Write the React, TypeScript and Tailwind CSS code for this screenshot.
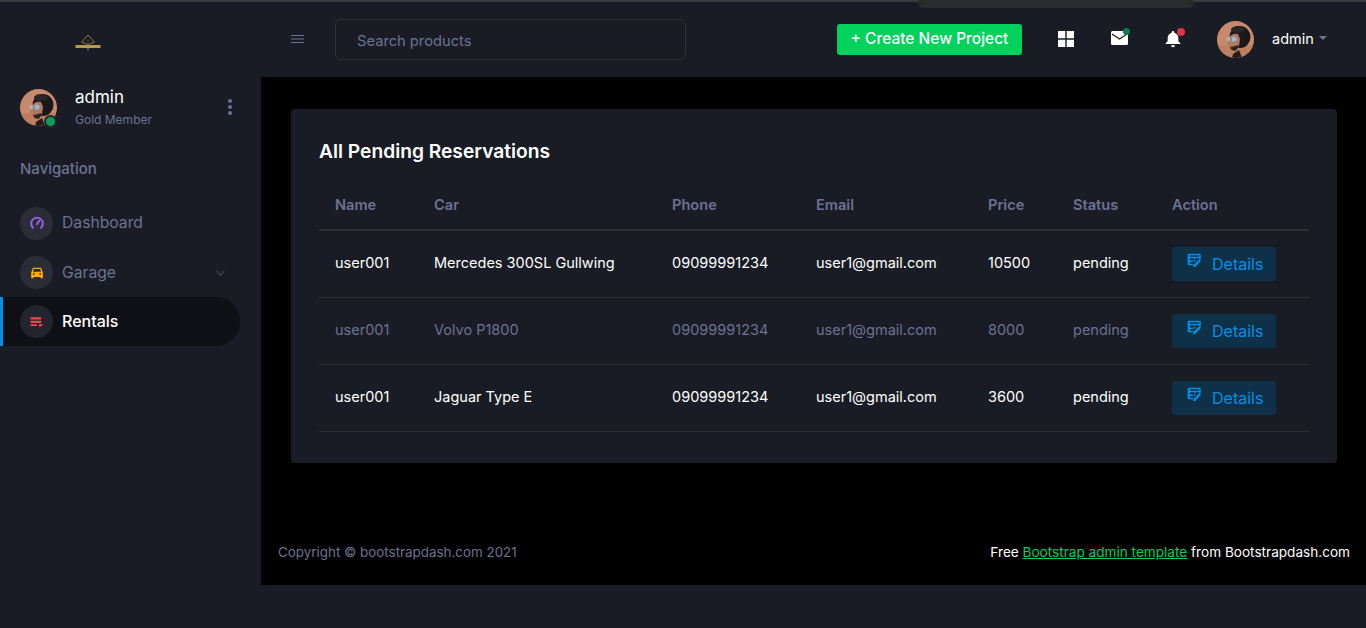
import { useId } from "react";

const font = "font-['Inter','Roboto',sans-serif]";

const rows = [
  { name: "user001", car: "Mercedes 300SL Gullwing", phone: "09099991234", email: "user1@gmail.com", price: "10500", muted: false },
  { name: "user001", car: "Volvo P1800", phone: "09099991234", email: "user1@gmail.com", price: "8000", muted: true },
  { name: "user001", car: "Jaguar Type E", phone: "09099991234", email: "user1@gmail.com", price: "3600", muted: false },
];

function Avatar({ size }: { size: number }) {
  const id = useId();
  return (
    <svg width={size} height={size} viewBox="0 0 37 37" className="block shrink-0">
      <defs>
        <clipPath id={id}>
          <circle cx="18.5" cy="18.5" r="18.5" />
        </clipPath>
      </defs>
      <g clipPath={`url(#${id})`}>
        <rect width="37" height="37" fill="#c88a6c" />
        <rect x="0" y="24" width="37" height="13" fill="#bd7f60" />
        {/* hat */}
        <ellipse cx="23" cy="16" rx="10.500" ry="11" fill="#1b1819" />
        <ellipse cx="21" cy="8.500" rx="7" ry="3.500" fill="#2a2626" />
        {/* face */}
        <path d="M12 17c1-3 5-5 9-4l2 5-1 7-5 5c-3 0-5-2-5-5l-2-2z" fill="#b07a60" />
        {/* glasses */}
        <circle cx="17" cy="18" r="2.600" fill="#9db6d2" />
        <circle cx="11.500" cy="18" r="2" fill="#9db6d2" />
        <path d="M13 18h2" stroke="#5d6a7d" strokeWidth="0.800" />
        {/* beard and shirt */}
        <path d="M13 25.500c2 .5 4.500 .2 7.500-1.500l1.500 1.500-3.500 4.500-4-1z" fill="#2c2220" />
        <path d="M16 33l6-4 3 8H15z" fill="#231c1c" />
      </g>
    </svg>
  );
}

function DetailsButton() {
  return (
    <button className="flex h-[34px] w-[104px] items-center rounded-[3px] bg-[#0e3148] pl-[15px] text-base text-[#0090e7]">
      <svg width="15" height="15" viewBox="0 0 24 24" fill="currentColor" className="mb-[6px] mr-[10px] shrink-0">
        <path d="M3 1h17a2 2 0 0 1 2 2v7h-2.500V8.500H12.500V12h2.500l-2.500 2.500h-1V8.500h-7V12h5v2.500h-5V17h5v2.500H3a2 2 0 0 1-2-2V3a2 2 0 0 1 2-2zm1.500 2.500V6h15V3.500zM22.500 12.500L13 22.500H10v-3l9.500-9.500z" />
      </svg>
      Details
    </button>
  );
}

function NavIcon({ children, active }: { children: React.ReactNode; active?: boolean }) {
  return (
    <span className={`flex h-[33px] w-[33px] shrink-0 items-center justify-center rounded-full ${active ? "bg-[#22252d]" : "bg-[#2a2d37]"}`}>
      {children}
    </span>
  );
}

export default function App() {
  return (
    <div className={`relative h-[628px] w-[1366px] overflow-hidden bg-[#191c24] ${font} text-sm text-white`}>
      <div className="h-[2px] bg-[#3a3b3f]" />
      {/* dropdown peeking out of the top */}
      <div className="absolute left-[918px] top-0 h-[8px] w-[276px] rounded-b-[6px] bg-[#2a2b2f]" />

      <div className="flex h-[626px]">
        <aside className="w-[261px] shrink-0">
          <div className="flex h-[72px] justify-center pt-[32px]">
            <svg width="26" height="18" viewBox="0 0 26 18" className="mr-[86px]">
              <path d="M13 1l6.500 7L13 10.500 6.500 8z" fill="none" stroke="#8d7a45" strokeWidth="1" />
              <circle cx="13" cy="6.500" r="1" fill="#5a4e2e" />
              <rect x="0.500" y="11" width="25" height="3" fill="#b99c52" />
              <path d="M11.500 14.500h3L13 16.500z" fill="#8d7a45" />
            </svg>
          </div>

          <div className="flex h-[66px] items-center pl-5 pr-[29px]">
            <div className="relative">
              <Avatar size={37} />
              <span className="absolute bottom-[-2px] right-0 h-[13px] w-[13px] rounded-full border-2 border-[#22252b] bg-[#0f9d58]" />
            </div>
            <div className="ml-[18px] flex-1">
              <div className="mt-[-1px] text-[17px] leading-[20px]">admin</div>
              <div className="mt-[5px] text-xs leading-[15px] text-[#6c7293]">Gold Member</div>
            </div>
            <div className="flex flex-col gap-[2px]">
              <span className="h-[4px] w-[4px] rounded-full bg-[#6c7293]" />
              <span className="h-[4px] w-[4px] rounded-full bg-[#6c7293]" />
              <span className="h-[4px] w-[4px] rounded-full bg-[#6c7293]" />
            </div>
          </div>

          <div className="mt-[19px] pl-5 text-[15px] font-medium leading-[20px] text-[#6c7293]">Navigation</div>

          <nav className="mt-[19px]">
            <div className="flex h-[50px] items-center pl-5 text-[15.700px] text-[#6c7293]">
              <NavIcon>
                <svg width="14" height="14" viewBox="0 0 24 24" fill="none" stroke="#8f5fe8" strokeWidth="3.500" strokeLinecap="round">
                  <path d="M5 20a10 10 0 1 1 14 0" />
                  <path d="M12 14l4-6" />
                </svg>
              </NavIcon>
              <span className="ml-[9px]">Dashboard</span>
            </div>
            <div className="flex h-[49px] items-center pl-5 pr-[36px] text-[15.700px] text-[#6c7293]">
              <NavIcon>
                <svg width="14" height="14" viewBox="0 0 24 24" fill="#ffab00">
                  <path d="M5 3h14l3 8v10h-4v-2H6v2H2V11zm1.500 2L5 10h14l-1.500-5zM6.500 12a1.500 1.500 0 1 0 0 3 1.500 1.500 0 0 0 0-3zm11 0a1.500 1.500 0 1 0 0 3 1.500 1.500 0 0 0 0-3z" />
                </svg>
              </NavIcon>
              <span className="ml-[9px] mt-[2px] flex-1">Garage</span>
              <svg width="9" height="6" viewBox="0 0 9 6" fill="none" stroke="#3d404c" strokeWidth="1.300">
                <path d="M0.500 1l4 4 4-4" />
              </svg>
            </div>
            <div className="flex h-[49px] w-[240px] items-center rounded-r-full border-l-[3px] border-[#0090e7] bg-[#0f1015] pl-[17px] text-base text-white">
              <NavIcon active>
                <svg width="14" height="14" viewBox="0 0 24 24" fill="#fc424a">
                  <path d="M1 4h18v3.500H1zM1 10h18v3.500H1zM1 16h11v3H1zM15 16h8l-4 3.500h-4z" />
                </svg>
              </NavIcon>
              <span className="ml-[9px] mt-[-2px] font-medium">Rentals</span>
            </div>
          </nav>
        </aside>

        <div className="flex min-w-0 flex-1 flex-col">
          <header className="flex h-[75px] shrink-0 items-center">
            <svg width="13" height="10" viewBox="0 0 13 10" stroke="#6c7293" strokeWidth="1" className="ml-[30px] mt-[-2px]">
              <path d="M0 1.500h13M0 5h13M0 8.500h13" />
            </svg>
            <div className="ml-[31px] flex h-[41px] w-[351px] items-center rounded-[6px] border border-[#2c2e33] pl-[21px] pt-[3px] text-[14.700px] text-[#6c7293]">
              Search products
            </div>
            <button className="ml-[151px] mt-[-1px] h-[31px] w-[185px] rounded-[3px] bg-[#00d25b] text-[15.500px] font-medium">+ Create New Project</button>
            <svg width="16" height="16" viewBox="0 0 16 16" fill="#fff" className="ml-[36px] mt-[-1px]">
              <path d="M0 0h7.300v7.300H0zM8.700 0H16v7.300H8.700zM0 8.700h7.300V16H0zM8.700 8.700H16V16H8.700z" />
            </svg>
            <span className="relative ml-[37px] mt-[-3px]">
              <svg width="17" height="14" viewBox="0 0 17 14" className="block">
                <rect width="17" height="14" rx="1.500" fill="#fff" />
                <path d="M1 3l7.500 5L16 3" fill="none" stroke="#191c24" strokeWidth="1.200" />
              </svg>
              <span className="absolute right-[-2px] top-[-3px] h-[7px] w-[7px] rounded-full bg-[#0f7a4d]" />
            </span>
            <span className="relative ml-[37px] mt-[-2px]">
              <svg width="16" height="18" viewBox="0 0 24 26" fill="#fff" className="block">
                <path d="M12 1a2 2 0 0 1 2 2v.500c3.500 1 6 4 6 8v5l3 3v1H1v-1l3-3v-5c0-4 2.500-7 6-8V3a2 2 0 0 1 2-2zM9 22.500h6a3 3 0 0 1-6 0z" />
              </svg>
              <span className="absolute right-[-4px] top-[-2px] h-[8px] w-[8px] rounded-full bg-[#dc3545]" />
            </span>
            <span className="ml-[36px] mt-[-1px]">
              <Avatar size={37} />
            </span>
            <span className="ml-[18px] mt-[-1px] text-[14.500px] font-normal">admin</span>
            <span className="ml-[5px] mt-[-3px] h-0 w-0 border-x-[4px] border-t-[4px] border-x-transparent border-t-[#6c7293]" />
          </header>

          <main className="flex h-[508px] flex-col bg-black">
            <section className="ml-[30px] mr-[29px] mt-[32px] h-[354px] rounded-[4px] bg-[#191c24] px-[28px] pt-[31px]">
              <h2 className="text-[19.200px] font-semibold leading-[22px]">All Pending Reservations</h2>
              <table className="mt-[22px] w-full table-fixed border-collapse">
                <colgroup>
                  <col className="w-[99px]" />
                  <col className="w-[238px]" />
                  <col className="w-[144px]" />
                  <col className="w-[172px]" />
                  <col className="w-[85px]" />
                  <col className="w-[99px]" />
                  <col />
                </colgroup>
                <thead>
                  <tr className="h-[46px] border-b-2 border-[#2c2e33] text-left text-[14.600px] font-medium text-[#6c7293]">
                    {["Name", "Car", "Phone", "Email", "Price", "Status", "Action"].map((h) => (
                      <th key={h} className="pb-[2px] pl-4 font-semibold">{h}</th>
                    ))}
                  </tr>
                </thead>
                <tbody>
                  {rows.map((r) => (
                    <tr key={r.car} className={`h-[67px] border-b border-[#2c2e33] text-[14.500px] ${r.muted ? "text-[#6c7293]" : "text-white"}`}>
                      <td className="pl-4">{r.name}</td>
                      <td className="pl-4">{r.car}</td>
                      <td className="pl-4">{r.phone}</td>
                      <td className="pl-4">{r.email}</td>
                      <td className="pl-4">{r.price}</td>
                      <td className="pl-4">pending</td>
                      <td className="pl-4"><DetailsButton /></td>
                    </tr>
                  ))}
                </tbody>
              </table>
            </section>
            <footer className="mt-[80px] flex justify-between pl-[17px] pr-4 leading-[18px]">
              <span className="text-[13.400px] text-[#6c7293]">Copyright © bootstrapdash.com 2021</span>
              <span className="text-[13.600px]">
                Free <a className="text-[#00d25b] underline">Bootstrap admin template</a> from Bootstrapdash.com
              </span>
            </footer>
          </main>
        </div>
      </div>
    </div>
  );
}
